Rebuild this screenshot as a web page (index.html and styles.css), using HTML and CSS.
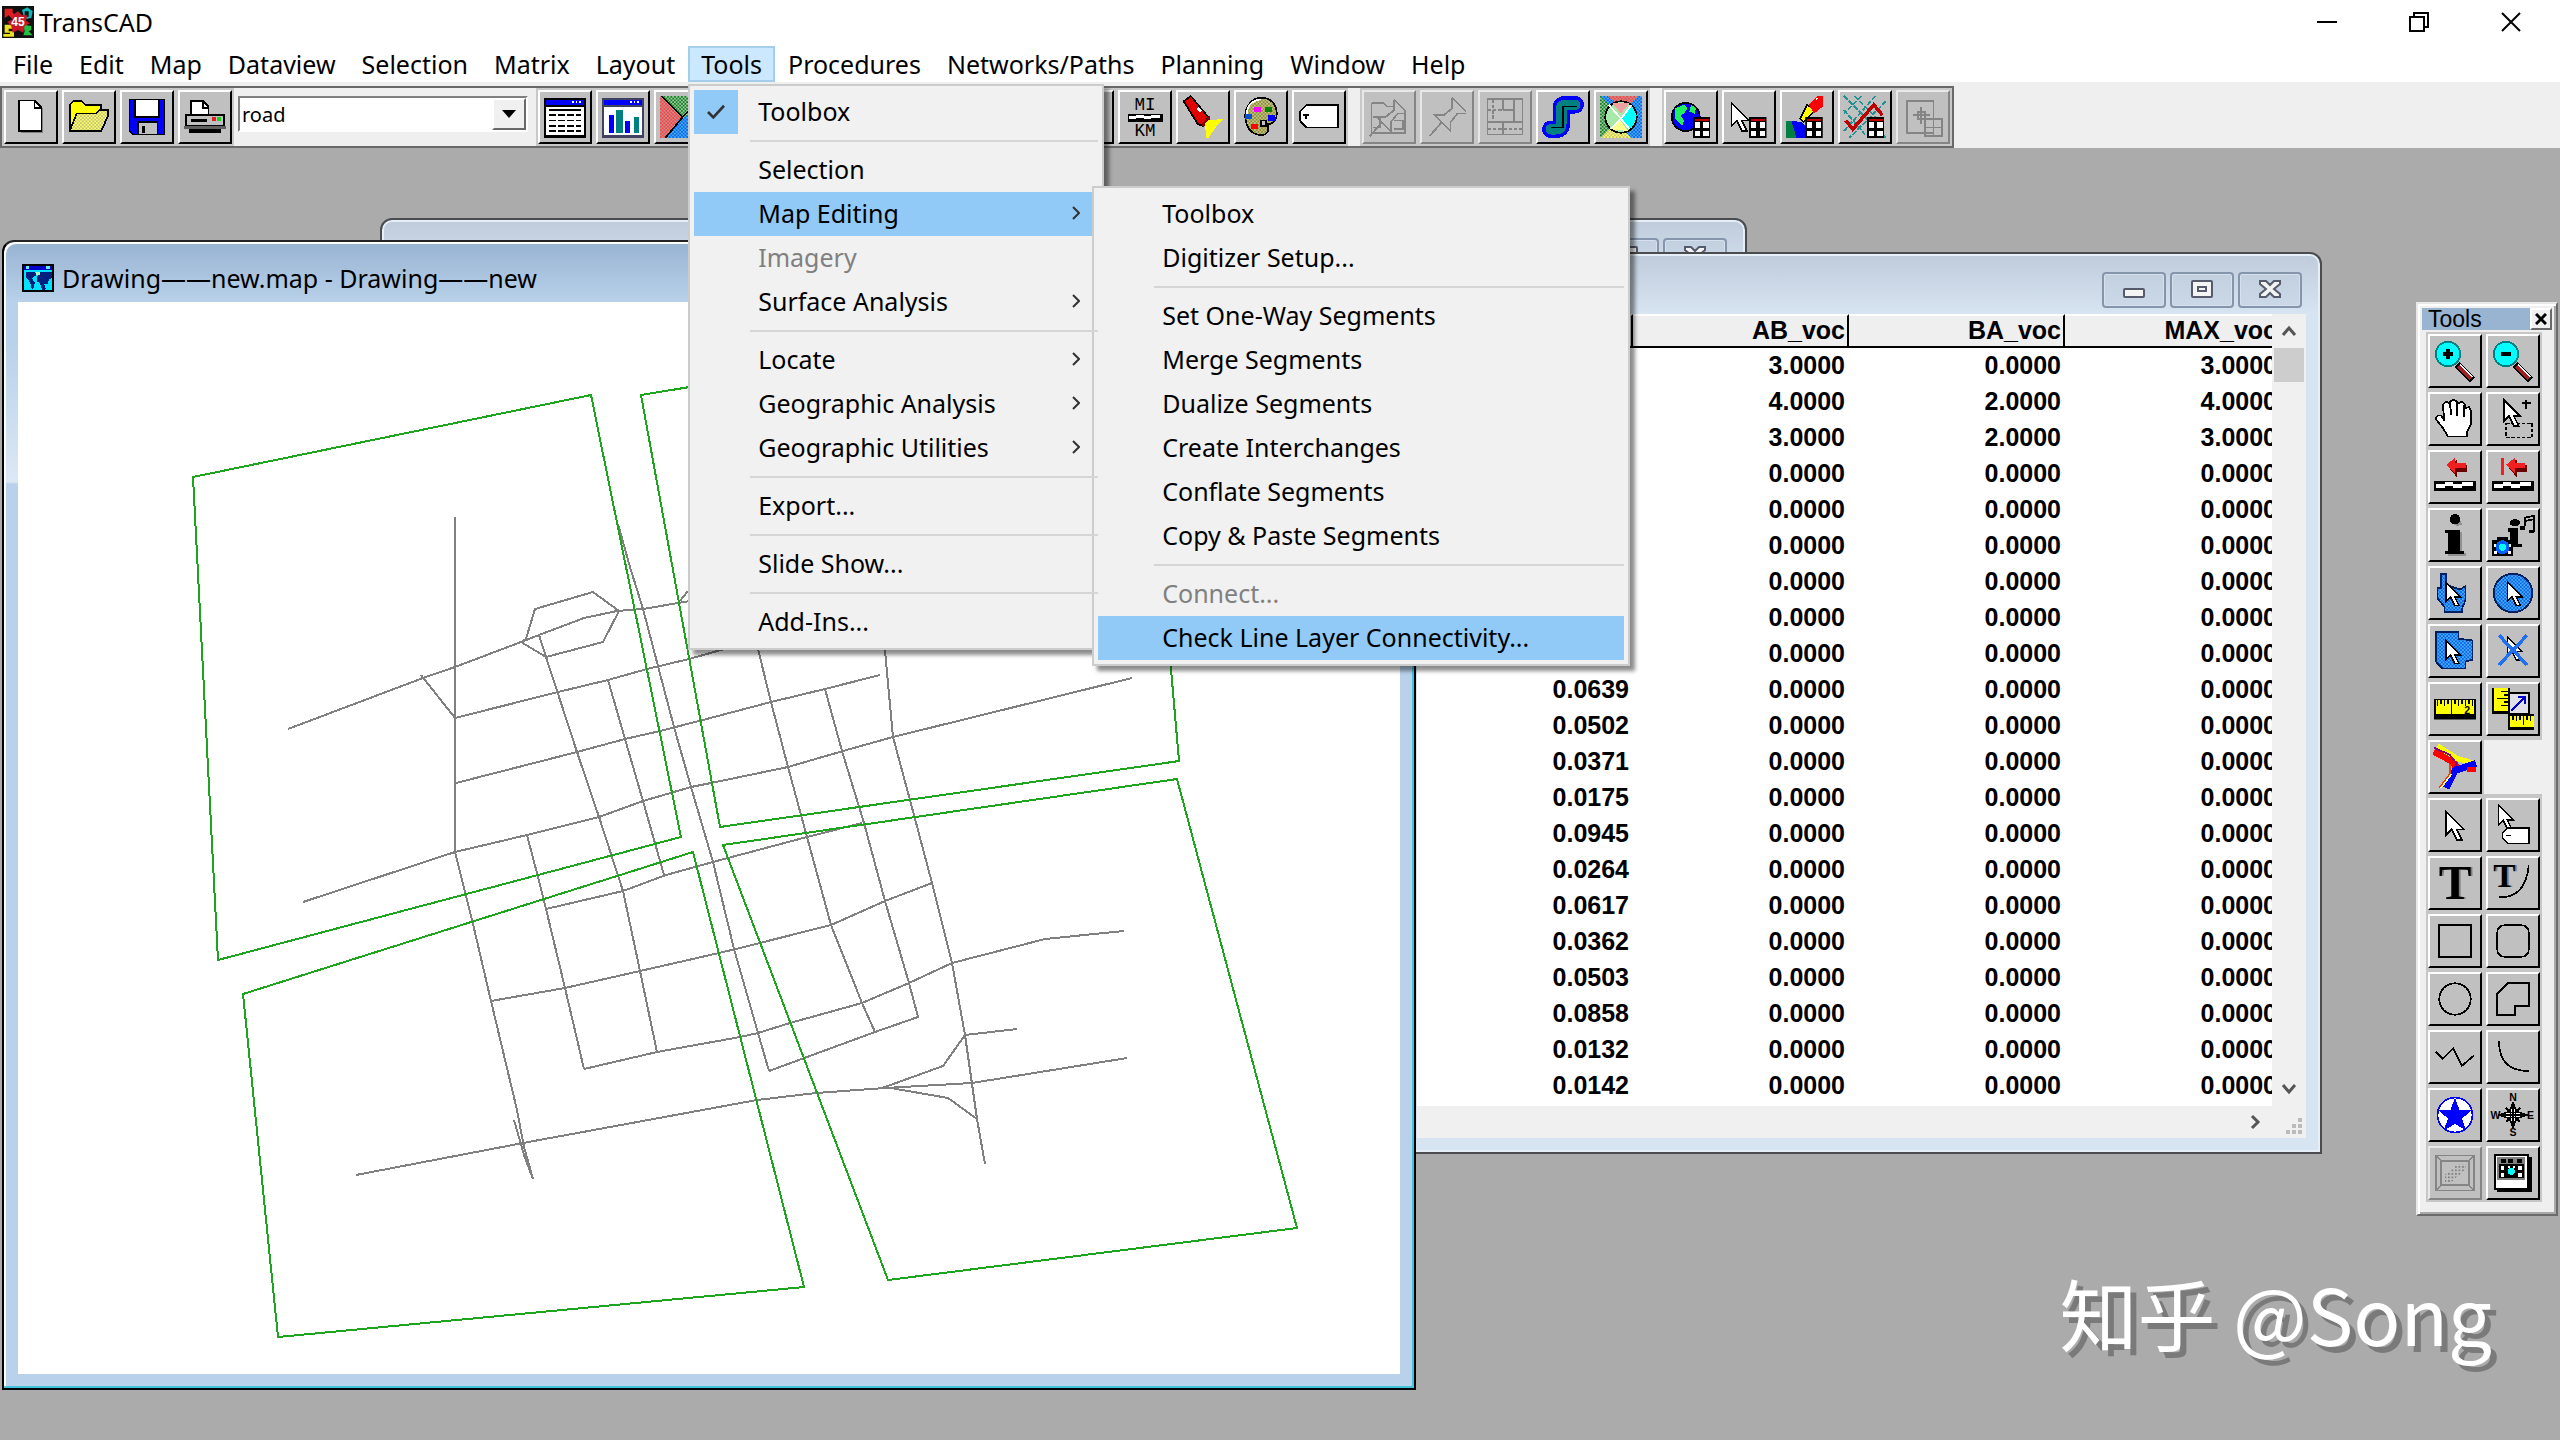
FILE: index.html
```html
<!DOCTYPE html>
<html lang="en">
<head>
    <meta charset="UTF-8">
    <meta name="viewport" content="width=device-width, initial-scale=1.0">
    <title>TransCAD</title>
    <link rel="stylesheet" href="styles.css">
</head>
<body>

    <!-- shared icon parts -->
    <svg class="defs" width="0" height="0" aria-hidden="true">
        <defs>
            <pattern id="dYellow" width="2" height="2" patternUnits="userSpaceOnUse"><rect width="2" height="2" fill="#ffff60"/><path d="M0 0h1v1H0zM1 1h1v1H1z" fill="#c0c080"/></pattern>
            <pattern id="dOlive" width="2" height="2" patternUnits="userSpaceOnUse"><rect width="2" height="2" fill="#c0c0a0"/><path d="M0 0h1v1H0zM1 1h1v1H1z" fill="#909020"/></pattern>
            <pattern id="dRed" width="2" height="2" patternUnits="userSpaceOnUse"><rect width="2" height="2" fill="#ff4040"/><path d="M0 0h1v1H0zM1 1h1v1H1z" fill="#c09090"/></pattern>
            <pattern id="dGreen" width="2" height="2" patternUnits="userSpaceOnUse"><rect width="2" height="2" fill="#a0c8a0"/><path d="M0 0h1v1H0zM1 1h1v1H1z" fill="#108020"/></pattern>
            <pattern id="dBlue" width="2" height="2" patternUnits="userSpaceOnUse"><rect width="2" height="2" fill="#40b0ff"/><path d="M0 0h1v1H0zM1 1h1v1H1z" fill="#1060e0"/></pattern>
            <pattern id="dGray" width="2" height="2" patternUnits="userSpaceOnUse"><path d="M0 0h1v1H0z" fill="#808080"/></pattern>
            <symbol id="cursor" viewBox="0 0 12 18"><path d="M1 1v13l3-3 3 6h3l-3-6h4z" fill="#fff" stroke="#000"/></symbol>
            <symbol id="cells" viewBox="0 0 10 12"><path d="M0 0h10v12H0z"/><path d="M1 1h8v1H1z" fill="#c00000"/><path d="M1 3h3v3H1zM6 3h3v3H6zM1 8h3v3H1zM6 8h3v3H6z" fill="#fff"/></symbol>
            <symbol id="scale" viewBox="0 0 24 6"><path d="M0 0h24v6H0z"/><path d="M1 2h5v2H1zM11 2h5v2h-5zM6 1h5v2H6zM16 1h6v2h-6z" fill="#fff"/></symbol>
            <symbol id="ruler" viewBox="0 0 24 12"><path d="M0 0h24v12H0z"/><path d="M1 1h22v8H1z" fill="#ff0"/><path d="M2 1v3M4 1v2M6 1v3M8 1v2M10 1v8M12 1v2M14 1v3M16 1v2M18 1v3M20 1v2M22 1v3" stroke="#000"/></symbol>
        </defs>
    </svg>

    <header class="titlebar">
        <svg class="app-icon" viewBox="0 0 24 24" aria-hidden="true">
            <path d="M0 0h24v24H0z" fill="#101010"/>
            <path d="M2 2h6v3l3 3-3 2-3-3-3 2z" fill="#e02020"/>
            <path d="M15 3l4-2 4 3-1 5-5 1zM17 4v4h3V4z" fill="#10b8b8" fill-rule="evenodd"/>
            <path d="M2 14h7v3H5v2h4v4H1v-2h5v-1H2z" fill="#e8e020"/>
            <path d="M16 14l6 1v3l-2 1 3 3h-7l1-3z" fill="#20c040"/>
            <path d="M12 4l3 3h4l-1 4 3 2-4 2-1 5-4-2-4 2-1-5-3-3 4-2 1-4z" fill="#c81828"/>
            <text x="12" y="15" class="badge-text">45</text>
        </svg>
        <h1>TransCAD</h1>
        <div class="window-controls">
            <button aria-label="Minimize"><svg viewBox="0 0 20 20"><path d="M0 10h20" stroke="#000" stroke-width="2"/></svg></button>
            <button aria-label="Restore"><svg viewBox="0 0 20 20" fill="none" stroke="#000" stroke-width="2"><path d="M1 5h14v14H1zM5 5V1h14v14h-4"/></svg></button>
            <button aria-label="Close"><svg viewBox="0 0 20 20"><path d="M1 1l18 18M19 1L1 19" stroke="#000" stroke-width="2"/></svg></button>
        </div>
    </header>

    <nav class="menubar">
        <button>File</button>
        <button>Edit</button>
        <button>Map</button>
        <button>Dataview</button>
        <button>Selection</button>
        <button>Matrix</button>
        <button>Layout</button>
        <div class="menu-holder">
            <button class="open">Tools</button>
            <ul class="menu menu-tools">
                <li><button><span class="check"><svg viewBox="0 0 22 18"><path d="M2 9l6 6L20 2" fill="none" stroke="#333" stroke-width="3"/></svg></span>Toolbox</button></li>
                <li class="sep"></li>
                <li><button>Selection</button></li>
                <li>
                    <button class="active">Map Editing<svg class="more" viewBox="0 0 8 14"><path d="M1 1l6 6-6 6"/></svg></button>
                    <ul class="menu menu-editing">
                        <li><button>Toolbox</button></li>
                        <li><button>Digitizer Setup...</button></li>
                        <li class="sep"></li>
                        <li><button>Set One-Way Segments</button></li>
                        <li><button>Merge Segments</button></li>
                        <li><button>Dualize Segments</button></li>
                        <li><button>Create Interchanges</button></li>
                        <li><button>Conflate Segments</button></li>
                        <li><button>Copy &amp; Paste Segments</button></li>
                        <li class="sep"></li>
                        <li><button disabled>Connect...</button></li>
                        <li><button class="active">Check Line Layer Connectivity...</button></li>
                    </ul>
                </li>
                <li><button disabled>Imagery</button></li>
                <li><button>Surface Analysis<svg class="more" viewBox="0 0 8 14"><path d="M1 1l6 6-6 6"/></svg></button></li>
                <li class="sep"></li>
                <li><button>Locate<svg class="more" viewBox="0 0 8 14"><path d="M1 1l6 6-6 6"/></svg></button></li>
                <li><button>Geographic Analysis<svg class="more" viewBox="0 0 8 14"><path d="M1 1l6 6-6 6"/></svg></button></li>
                <li><button>Geographic Utilities<svg class="more" viewBox="0 0 8 14"><path d="M1 1l6 6-6 6"/></svg></button></li>
                <li class="sep"></li>
                <li><button>Export...</button></li>
                <li class="sep"></li>
                <li><button>Slide Show...</button></li>
                <li class="sep"></li>
                <li><button>Add-Ins...</button></li>
            </ul>
        </div>
        <button>Procedures</button>
        <button>Networks/Paths</button>
        <button>Planning</button>
        <button>Window</button>
        <button>Help</button>
    </nav>

    <div class="toolbar">
        <div class="strip">
            <div class="group">
                <button class="tool" aria-label="New"><svg viewBox="0 0 24 24"><path d="M6 4h9v3h4v14H6z" fill="#808080"/><path d="M5 2.500h9l4 4V20H5z" fill="#fff" stroke="#000"/><path d="M14 3v4h4" fill="none" stroke="#000"/></svg></button>
                <button class="tool" aria-label="Open"><svg viewBox="0 0 24 24"><path d="M1 20V5l2-2h5l2 2h9v5" fill="#ff0" stroke="#000"/><path d="M1 20l4-10h11l2-2h5v3l-4 9z" fill="url(#dYellow)" stroke="#000"/></svg></button>
                <button class="tool" aria-label="Save"><svg viewBox="0 0 24 24"><path d="M2 2h20v20H4l-2-2z" fill="#00f" stroke="#000"/><path d="M5 2h14v10H5z" fill="#fff" stroke="#000"/><path d="M7 15h11v7H7z" fill="#c0c0c0" stroke="#000"/><path d="M9 17h2v4H9z"/></svg></button>
                <button class="tool" aria-label="Print"><svg viewBox="0 0 24 24"><path d="M4 11V3h7l3 3v5" fill="#fff" stroke="#000"/><path d="M11 3v4h3" fill="none" stroke="#000"/><path d="M1 11h22v6H1z" fill="#c0c0c0" stroke="#000"/><path d="M0 17h24v2H0z" fill="#606060"/><path d="M4 13h9v2H4z"/><path d="M3 19h18v2H3z"/><path d="M16 12h2v2h-2z" fill="#e02020"/><path d="M19 12h2v2h-2z" fill="#20d020"/></svg></button>
            </div>
            <div class="layer-box">
                <div class="combo">
                    <select aria-label="Layer"><option>road</option></select>
                    <span class="drop"></span>
                </div>
            </div>
            <div class="group">
                <button class="tool" aria-label="Dataview"><svg viewBox="0 0 24 24"><path d="M0 1h24v23H0z"/><path d="M1 2h22v3H1z" fill="#00f"/><path d="M16 3h1v1h-1zM18 3h1v1h-1zM20 3h1v1h-1z" fill="#fff"/><path d="M1 6h22v16H1z" fill="#fff"/><path d="M3 8h18M3 11h4M8 11h4M13 11h4M18 11h3M3 14h4M8 14h4M13 14h4M18 14h3M3 17h4M8 17h4M13 17h4M18 17h3M3 20h4M8 20h4M13 20h4M18 20h3" stroke="#000"/></svg></button>
                <button class="tool" aria-label="Chart"><svg viewBox="0 0 24 24"><path d="M0 1h24v23H0z" fill="#404060"/><path d="M1 2h22v3H1z" fill="#00f"/><path d="M16 3h1v1h-1zM18 3h1v1h-1zM20 3h1v1h-1z" fill="#fff"/><path d="M1 6h22v16H1z" fill="#fff"/><path d="M4 11h3v10H4zM13 14h3v7h-3z" fill="#00f"/><path d="M8 8h4v13H8zM18 12h3v9h-3z" fill="#008080"/></svg></button>
                <button class="tool" aria-label="Color theme"><svg viewBox="0 0 24 24"><path d="M0 0h24v24H0z" fill="url(#dBlue)"/><path d="M0 0l12 12L3 24H0z" fill="url(#dRed)"/><path d="M0 0h24v4L13 13z" fill="url(#dGreen)"/><path d="M1 0l12 12L3 24M13 12L24 0" fill="none" stroke="#000"/></svg></button>
                <button class="tool"></button>
                <button class="tool"></button>
                <button class="tool"></button>
                <button class="tool"></button>
                <button class="tool"></button>
                <button class="tool"></button>
                <button class="tool"></button>
                <button class="tool" aria-label="Map units"><svg viewBox="0 0 24 24"><text x="12" y="8" class="unit-text">MI</text><use href="#scale" x="0" y="10" width="24" height="5"/><text x="12" y="23" class="unit-text">KM</text></svg></button>
                <button class="tool" aria-label="Find"><svg viewBox="0 0 24 24"><path d="M1 3l4-3 10 12-3 5-3-1z" fill="#e00000" stroke="#000"/><path d="M9 7l2 2" stroke="#fff" stroke-width="2"/><path d="M11 16l5-5v4l-4 3z" fill="#800000"/><path d="M13 16l2-2 9-1-4 4-5 7h-1z" fill="#ff0"/></svg></button>
                <button class="tool" aria-label="Styles"><svg viewBox="0 0 24 24"><path d="M12 1c6 0 9 4 9 9s-3 6-5 6v3c0 3-3 4-6 3-5-1-7-6-7-11s4-10 9-10z" fill="url(#dOlive)" stroke="#000"/><path d="M4 10c0-5 4-8 8-8" fill="none" stroke="#fff"/><path d="M8 6h4v3H8z" fill="#f0f"/><path d="M14 6h4v3h-4z" fill="#008000"/><path d="M3 10h4v3H3z" fill="#0050d0"/><path d="M16 11h4v3h-4z" fill="#00f"/><path d="M6 16h4v3H6z" fill="#f00"/><path d="M12 14h3v3h-3z" fill="#c0c0c0" stroke="#000"/></svg></button>
                <button class="tool" aria-label="Labels"><svg viewBox="0 0 24 24"><path d="M5 5h18v13H5l-4-4V9z" fill="#fff" stroke="#000"/><path d="M3 11h3M4.500 10v3" stroke="#000"/></svg></button>
            </div>
            <div class="group">
                <button class="tool" disabled aria-label="Edit pins"><svg viewBox="0 0 24 24" fill="none" stroke="#858585"><path d="M2 4h7l2 2h4M2 4v17h19V8M15 2l6 6M15 2v6l-5 4h-5l8 8v-5l4-5h4M8 15l-7 8M3 12h4v6H3M15 14h5v5h-5"/></svg></button>
                <button class="tool" disabled aria-label="Pin"><svg viewBox="0 0 24 24" fill="none" stroke="#858585"><path d="M15 1l8 8M15 1v6l-5 4H5l9 9v-5l4-5h5M9 15l-7 8"/></svg></button>
                <button class="tool" disabled aria-label="Page grid"><svg viewBox="0 0 24 24" fill="none" stroke="#858585"><path d="M2 1.500h20V22H2zM2 15h20M11 15v7M11 8h6M17 2v13M11 2v6"/><path d="M2 8h9M5 2v13M2 19h20" stroke-dasharray="2 1"/></svg></button>
                <button class="tool" aria-label="Route system"><svg viewBox="0 0 24 24"><path d="M19 5h-6q-2 0-2 2v9q0 3-3 3H5" fill="none" stroke="#00f" stroke-width="10" stroke-linecap="round"/><path d="M19 5h-6q-2 0-2 2v9q0 3-3 3H5" fill="none" stroke="#008080" stroke-width="6" stroke-linecap="round"/><path d="M20 6h-8v12H5" fill="none" stroke="#000"/></svg></button>
                <button class="tool" aria-label="Overlay"><svg viewBox="0 0 24 24"><path d="M0 0h24v24H0z" fill="url(#dBlue)"/><path d="M0 0l13 12L0 24z" fill="url(#dGreen)"/><path d="M4 0h18l-8 8z" fill="url(#dRed)"/><path d="M0 24l9-9 9 9z" fill="url(#dYellow)"/><circle cx="12" cy="12" r="9" fill="#a8e8a8" stroke="#000"/><path d="M7 4h10l-5 6z" fill="#f0a0a0"/><path d="M12 13l6-8 3 6-2 6-3 2z" fill="#0ff"/><path d="M6 19l5-6 5 7z" fill="#ffff90"/><path d="M5 5l7 8 6-8M12 13l-6 6M12 13l5 6" fill="none" stroke="#fff"/></svg></button>
            </div>
            <div class="group">
                <button class="tool" aria-label="Select by location"><svg viewBox="0 0 24 24"><circle cx="9" cy="12" r="8" fill="#00f" stroke="#000"/><path d="M3 7l5-2 2 2-2 3-2 1 2 3-1 3-4-4zM12 5l3 2-1 3-3-1z" fill="#20f060"/><use href="#cells" x="13" y="12" width="10" height="12"/></svg></button>
                <button class="tool" aria-label="Select by pointing"><svg viewBox="0 0 24 24"><use href="#cursor" x="1" y="3" width="12" height="18"/><use href="#cells" x="12" y="12" width="10" height="12"/></svg></button>
                <button class="tool" aria-label="Select by value"><svg viewBox="0 0 24 24"><path d="M0 14h4l5 4v6H0z" fill="#008040"/><path d="M3 14l6 1 4 4v5H6z" fill="#00f"/><path d="M8 13l4-8 5 3-7 7z" fill="#ff0" stroke="#000"/><path d="M13 5l5-5h3v6l-5 4z" fill="#f00"/><path d="M17 2l1-1" stroke="#fff"/><use href="#cells" x="11" y="12" width="10" height="12"/></svg></button>
                <button class="tool" aria-label="Select network"><svg viewBox="0 0 24 24"><path d="M0 0l24 24M6 0l16 16M0 8l12 14M18 0L0 20M24 3L3 24M10 0L0 10" stroke="#209090" stroke-dasharray="3 1"/><path d="M1 14l4 5L17 5l5 6" fill="none" stroke="#c00000" stroke-width="2"/><use href="#cells" x="13" y="12" width="10" height="12"/></svg></button>
                <button class="tool" disabled aria-label="Select center"><svg viewBox="0 0 24 24" fill="none" stroke="#858585"><path d="M3 3h15v18H3zM11 6v10M6 11h10M9 9h4v4H9zM13 13h10v10H13zM18 13v10M13 18h10"/></svg></button>
            </div>
        </div>
    </div>

    <main class="workspace">

        <section class="window back">
            <div class="caption">
                <div class="caption-buttons">
                    <button aria-label="Minimize"><svg viewBox="0 0 24 20"><rect x="2" y="9" width="20" height="8" rx="1"/></svg></button>
                    <button aria-label="Maximize"><svg viewBox="0 0 24 20"><rect x="2" y="1" width="20" height="16" rx="1"/><rect x="8" y="7" width="8" height="4"/></svg></button>
                    <button aria-label="Close"><svg viewBox="0 0 24 20"><path d="M2 1h6l4 4 4-4h6v3l-6 5 6 5v3h-6l-4-4-4 4H2v-3l6-5-6-5z"/></svg></button>
                </div>
            </div>
        </section>

        <section class="window dataview">
            <div class="caption">
                <div class="caption-buttons">
                    <button aria-label="Minimize"><svg viewBox="0 0 24 20"><rect x="2" y="9" width="20" height="8" rx="1"/></svg></button>
                    <button aria-label="Maximize"><svg viewBox="0 0 24 20"><rect x="2" y="1" width="20" height="16" rx="1"/><rect x="8" y="7" width="8" height="4"/></svg></button>
                    <button aria-label="Close"><svg viewBox="0 0 24 20"><path d="M2 1h6l4 4 4-4h6v3l-6 5 6 5v3h-6l-4-4-4 4H2v-3l6-5-6-5z"/></svg></button>
                </div>
            </div>
            <div class="sheet">
                <div class="table-wrap">
                    <table>
                        <thead>
                            <tr><th></th><th>AB_voc</th><th>BA_voc</th><th>MAX_voc</th></tr>
                        </thead>
                        <tbody>
                            <tr><td></td><td>3.0000</td><td>0.0000</td><td>3.0000</td></tr>
                            <tr><td></td><td>4.0000</td><td>2.0000</td><td>4.0000</td></tr>
                            <tr><td></td><td>3.0000</td><td>2.0000</td><td>3.0000</td></tr>
                            <tr><td></td><td>0.0000</td><td>0.0000</td><td>0.0000</td></tr>
                            <tr><td></td><td>0.0000</td><td>0.0000</td><td>0.0000</td></tr>
                            <tr><td></td><td>0.0000</td><td>0.0000</td><td>0.0000</td></tr>
                            <tr><td></td><td>0.0000</td><td>0.0000</td><td>0.0000</td></tr>
                            <tr><td></td><td>0.0000</td><td>0.0000</td><td>0.0000</td></tr>
                            <tr><td></td><td>0.0000</td><td>0.0000</td><td>0.0000</td></tr>
                            <tr><td>0.0639</td><td>0.0000</td><td>0.0000</td><td>0.0000</td></tr>
                            <tr><td>0.0502</td><td>0.0000</td><td>0.0000</td><td>0.0000</td></tr>
                            <tr><td>0.0371</td><td>0.0000</td><td>0.0000</td><td>0.0000</td></tr>
                            <tr><td>0.0175</td><td>0.0000</td><td>0.0000</td><td>0.0000</td></tr>
                            <tr><td>0.0945</td><td>0.0000</td><td>0.0000</td><td>0.0000</td></tr>
                            <tr><td>0.0264</td><td>0.0000</td><td>0.0000</td><td>0.0000</td></tr>
                            <tr><td>0.0617</td><td>0.0000</td><td>0.0000</td><td>0.0000</td></tr>
                            <tr><td>0.0362</td><td>0.0000</td><td>0.0000</td><td>0.0000</td></tr>
                            <tr><td>0.0503</td><td>0.0000</td><td>0.0000</td><td>0.0000</td></tr>
                            <tr><td>0.0858</td><td>0.0000</td><td>0.0000</td><td>0.0000</td></tr>
                            <tr><td>0.0132</td><td>0.0000</td><td>0.0000</td><td>0.0000</td></tr>
                            <tr><td>0.0142</td><td>0.0000</td><td>0.0000</td><td>0.0000</td></tr>
                        </tbody>
                    </table>
                </div>
                <div class="vscroll">
                    <button aria-label="Scroll up"><svg viewBox="0 0 16 16"><path d="M2 12l6-7 6 7"/></svg></button>
                    <div class="thumb"></div>
                    <button class="end" aria-label="Scroll down"><svg viewBox="0 0 16 16"><path d="M2 4l6 7 6-7"/></svg></button>
                </div>
                <div class="hscroll">
                    <button aria-label="Scroll right"><svg viewBox="0 0 16 16"><path d="M5 2l6 6-6 6"/></svg></button>
                </div>
                <div class="grip"><svg viewBox="0 0 16 16"><path d="M12 0h4v4h-4zM6 6h4v4H6zM12 6h4v4h-4zM0 12h4v4H0zM6 12h4v4H6zM12 12h4v4h-4z" fill="#bbb"/></svg></div>
            </div>
        </section>

        <section class="window map">
            <div class="caption">
                <svg class="map-icon" viewBox="0 0 20 18" aria-hidden="true">
                    <path d="M0 0h20v18H0z"/><path d="M1 1h18v16H1z" fill="#00e0ff"/><path d="M1 1h18v3H1z" fill="#00c"/><path d="M2 1h2v2H2zM15 1h3v2h-3z" fill="#60f0ff"/>
                    <path d="M2 5h6l1 2-3 2 1 2 1 1-1 4H6l-1-4-3-4zM10 6l3-1h6v4l-2 1-1 3h-2l1 3-2 1-2-5-2-1z" fill="#002080"/><path d="M9 5h2v2H9z" fill="#a0ffc0"/>
                </svg>
                <h2>Drawing——new.map - Drawing——new</h2>
            </div>
            <svg class="canvas" viewBox="18 302 1382 1072" role="img" aria-label="Road map">
                <g class="roads">
                    <path d="M455 517V852L473 924 491 1001 517 1110 524 1147 533 1179M514 1120L524 1155 533 1179"/>
                    <path d="M288 729L423 678 455 667 521 642 539 635 584 618 617 611 643 609 690 601 760 590"/>
                    <path d="M421 675L455 718"/>
                    <path d="M526 639L535 609 593 592 619 611 603 642 546 657 521 642z"/>
                    <path d="M680 601L687 592 700 590"/>
                    <path d="M455 718L558 692 608 680 647 669 689 659 721 650 860 610"/>
                    <path d="M456 783L577 752 625 739 660 731 699 721 771 702 825 689 880 675"/>
                    <path d="M303 902L455 852 527 835 599 817 643 801 691 787 711 783 788 767 843 751 893 737 1132 678"/>
                    <path d="M546 909L623 891 666 875 713 862 728 858 807 837 862 823"/>
                    <path d="M491 1001L565 988 640 971 719 953 736 949 831 925 885 901 932 883"/>
                    <path d="M584 1069L657 1052 740 1037 758 1033 790 1023 862 1003 909 983 952 963 1045 939 1124 931"/>
                    <path d="M769 1071L875 1032 918 1017 909 983 885 901 864 823 842 751 825 689"/>
                    <path d="M875 1032L862 1003 831 925 807 837 788 767 771 702 757 645"/>
                    <path d="M618 524L630 567 643 609 674 727 691 787 713 862 734 949 758 1033 769 1071"/>
                    <path d="M539 635L546 657 577 752 599 817 623 891 640 971 657 1052"/>
                    <path d="M608 680L625 739 643 801 664 875"/>
                    <path d="M527 835L538 877 546 909 565 988 584 1069"/>
                    <path d="M884 640L893 737 910 800 932 883 952 963 965 1035 977 1119 985 1164"/>
                    <path d="M1017 1029L965 1035 943 1066 885 1087 948 1098 977 1119"/>
                    <path d="M356 1175L523 1143 757 1100 816 1093 885 1088 972 1083 1127 1058"/>
                </g>
                <g class="zones">
                    <path d="M193 477L591 395 681 837 218 960z"/>
                    <path d="M641 395L1140 313 1179 761 720 827z"/>
                    <path d="M723 845L1177 779 1297 1228 888 1280z"/>
                    <path d="M243 994L693 852 804 1287 278 1337z"/>
                </g>
            </svg>
        </section>

        <aside class="palette">
            <div class="palette-title">
                <h2>Tools</h2>
                <button aria-label="Close"><svg viewBox="0 0 12 12"><path d="M1 1l10 10M11 1L1 11" stroke="#000" stroke-width="3"/></svg></button>
            </div>
            <div class="palette-grid">
                <button class="tool" aria-label="Zoom in"><svg viewBox="0 0 24 24"><path d="M13 14l9 9" stroke="#000" stroke-width="4"/><path d="M14 15l7 7" stroke="#a02020" stroke-width="2"/><path d="M15 14l7 7" stroke="#fff"/><circle cx="8" cy="8" r="7" fill="#0ff" stroke="#008080"/><path d="M5 8h6M8 5v6" stroke="#000" stroke-width="2"/></svg></button>
                <button class="tool" aria-label="Zoom out"><svg viewBox="0 0 24 24"><path d="M13 14l9 9" stroke="#000" stroke-width="4"/><path d="M14 15l7 7" stroke="#a02020" stroke-width="2"/><path d="M15 14l7 7" stroke="#fff"/><circle cx="8" cy="8" r="7" fill="#0ff" stroke="#008080"/><path d="M5 8h6" stroke="#000" stroke-width="2"/></svg></button>
                <button class="tool" aria-label="Pan"><svg viewBox="0 0 24 24"><path d="M8 22l-3-5-4-5 1-2h2l2 3-1-9 2-2 2 1V2l2-1 2 1 1 1 2-1 2 2v2l2-1 1 2v8l-2 4v3z" fill="#fff" stroke="#000"/><path d="M9 3l1 7M13 2v8M17 4v7" stroke="#000"/></svg></button>
                <button class="tool" aria-label="Select by box"><svg viewBox="0 0 24 24"><path d="M8 14.500h15v8H8z" fill="none" stroke="#000" stroke-dasharray="2 1"/><use href="#cursor" x="6" y="0" width="11" height="17"/><path d="M17 3h5M19.500 1v5" stroke="#000"/></svg></button>
                <button class="tool" aria-label="Previous scale"><svg viewBox="0 0 24 24"><path d="M8 6l5-4v3h6v4h-6v3z" fill="#600"/><path d="M7 5l5-4v3h6v3h-6v3z" fill="#f02020"/><use href="#scale" x="0" y="14" width="24" height="6"/></svg></button>
                <button class="tool" aria-label="Initial scale"><svg viewBox="0 0 24 24"><path d="M9 6l5-4v3h6v4h-6v3z" fill="#600"/><path d="M8 5l5-4v3h6v3h-6v3zM5 1h2v10H5z" fill="#f02020"/><use href="#scale" x="0" y="14" width="24" height="6"/></svg></button>
                <button class="tool" aria-label="Info"><svg viewBox="0 0 24 24"><path d="M9 4q3-4 6 0l1 2-3 1zM8 10h8v12h2v2H8z" fill="#909090"/><ellipse cx="12" cy="3" rx="3" ry="3"/><path d="M6 9h9v12h2v2H6v-2h2V11H6z"/></svg></button>
                <button class="tool" aria-label="Multimedia info"><svg viewBox="0 0 24 24"><ellipse cx="13" cy="5" rx="3" ry="2"/><path d="M9 8h6v9h2v2h-7v-9H9z"/><path d="M19 7V2l5-1v9M19 4l5-1" fill="none" stroke="#000"/><path d="M16 7h3v2h-3zM21 9h3v2h-3z"/><path d="M0 15h12v9H0z"/><path d="M1 17h2v2H1zM9 17h2v2H9zM1 21h2v2H1zM9 21h2v2H9z" fill="#fff"/><circle cx="6" cy="19" r="4" fill="#0060ff"/><circle cx="6" cy="19" r="2" fill="#0ff"/><path d="M3 13h6v2H3z"/></svg></button>
                <button class="tool" aria-label="Select by pointing"><svg viewBox="0 0 24 24"><path d="M4 1h3v7h2l3 1 3 1 3-2v8l-2 5v2H6v-3l-4-5V9h2z" fill="url(#dBlue)" stroke="#002060"/><use href="#cursor" x="6" y="5" width="10" height="15"/></svg></button>
                <button class="tool" aria-label="Select by circle"><svg viewBox="0 0 24 24"><circle cx="12" cy="12" r="11" fill="url(#dBlue)" stroke="#002060"/><use href="#cursor" x="8" y="5" width="10" height="15"/></svg></button>
                <button class="tool" aria-label="Select by shape"><svg viewBox="0 0 24 24"><path d="M1 1h13v4l8 1v11l-4 1v4H5l-4-4z" fill="url(#dBlue)" stroke="#002060"/><use href="#cursor" x="6" y="5" width="10" height="15"/></svg></button>
                <button class="tool" aria-label="Clear selection"><svg viewBox="0 0 24 24"><use href="#cursor" x="8" y="3" width="10" height="15"/><path d="M4 3l16 17M20 3L4 20" stroke="#2070f0" stroke-width="2"/></svg></button>
                <button class="tool" aria-label="Measure distance"><svg viewBox="0 0 24 24"><use href="#ruler" x="0" y="6" width="24" height="12"/><text x="19" y="15" class="tiny-text">2</text></svg></button>
                <button class="tool" aria-label="Measure area"><svg viewBox="0 0 24 24"><path d="M0 0h10v15H0z"/><path d="M1 0h8v13H1z" fill="#ff0"/><path d="M5 2h4M7 4h2M3 6h6M7 8h2M5 10h4" stroke="#000"/><path d="M10 3h11v12H10z" fill="#e0e0e8" stroke="#000"/><path d="M11 13l8-8M15 5h4v4" fill="none" stroke="#00c"/><path d="M9 15h15v9H9z"/><path d="M10 16h14v6H10z" fill="#ff0"/><path d="M12 16v2M14 16v3M16 16v2M18 16v5M20 16v2M22 16v3" stroke="#000"/></svg></button>
                <button class="tool" aria-label="Shortest path"><svg viewBox="0 0 24 24"><path d="M0 3l11 6 2 4" fill="none" stroke="#f00" stroke-width="4"/><path d="M2 0l11 7 10 3" fill="none" stroke="#ff0" stroke-width="3"/><path d="M0 1l9 4 4 5-2 4" fill="none" stroke="#800080"/><path d="M7 24l5-10 12-4" fill="none" stroke="#00f" stroke-width="4"/><path d="M19 12h5v3h-5z" fill="#f00"/><path d="M3 24l6-8v-6" fill="none" stroke="#f04000"/><path d="M4 24l6-8" stroke="#ffffa0"/></svg></button>
                <span class="gap"></span>
                <button class="tool" aria-label="Pointer"><svg viewBox="0 0 24 24"><use href="#cursor" x="6" y="3" width="12" height="19"/></svg></button>
                <button class="tool" aria-label="Label pointer"><svg viewBox="0 0 24 24"><use href="#cursor" x="3" y="0" width="10" height="15"/><path d="M9 13.500h12v9H9l-3-3v-3z" fill="#fff" stroke="#000"/><path d="M8 18h3" stroke="#000"/></svg></button>
                <button class="tool" aria-label="Text"><svg viewBox="0 0 24 24"><text x="13" y="21" class="text-tool shade">T</text><text x="12" y="21" class="text-tool">T</text></svg></button>
                <button class="tool" aria-label="Curved text"><svg viewBox="0 0 24 24"><text x="8" y="14" class="text-tool small shade">T</text><text x="7" y="14" class="text-tool small">T</text><path d="M4 20q15 1 17-18" fill="none" stroke="#000"/></svg></button>
                <button class="tool" aria-label="Rectangle"><svg viewBox="0 0 24 24"><path d="M3 3h18v18H3z" fill="none" stroke="#000"/></svg></button>
                <button class="tool" aria-label="Rounded rectangle"><svg viewBox="0 0 24 24"><rect x="3" y="3" width="18" height="18" rx="4" fill="none" stroke="#000"/></svg></button>
                <button class="tool" aria-label="Ellipse"><svg viewBox="0 0 24 24"><circle cx="12" cy="12" r="9" fill="none" stroke="#000"/></svg></button>
                <button class="tool" aria-label="Polygon"><svg viewBox="0 0 24 24"><path d="M9 3h12v13h-8v5H3V9z" fill="none" stroke="#000"/></svg></button>
                <button class="tool" aria-label="Polyline"><svg viewBox="0 0 24 24"><path d="M1 9l4 4 6-6 5 10 7-6" fill="none" stroke="#000"/></svg></button>
                <button class="tool" aria-label="Curve"><svg viewBox="0 0 24 24"><path d="M4 3q0 17 17 17" fill="none" stroke="#000"/></svg></button>
                <button class="tool" aria-label="Symbol"><svg viewBox="0 0 24 24"><circle cx="12" cy="12" r="10" fill="#fff" stroke="#00f"/><path d="M12 2l2.500 7H22l-6 5 2.500 7-6.500-4-6.500 4L8 14 2 9h7.500z" fill="#00f"/></svg></button>
                <button class="tool" aria-label="North arrow"><svg viewBox="0 0 24 24"><path d="M12 5l2 5 6 2-6 2-2 5-2-5-6-2 6-2z" fill="#fff" stroke="#000"/><path d="M12 5v14M4 12h16M8 8l3 3M16 8l-3 3M8 16l3-3M16 16l-3-3" stroke="#000"/><text x="12" y="4" class="tiny-text">N</text><text x="12" y="24" class="tiny-text">S</text><text x="2" y="14" class="tiny-text">W</text><text x="22" y="14" class="tiny-text">E</text></svg></button>
                <button class="tool" disabled aria-label="Frame"><svg viewBox="0 0 24 24"><path d="M1 2h22v20H1zM4 5h16v14H4z" fill="none" stroke="#858585"/><path d="M1 2l3 3M23 2l-3 3M1 22l3-3M23 22l-3-3" stroke="#858585"/><path d="M6 17v-4l8-6h4v3l-8 7z" fill="url(#dGray)"/></svg></button>
                <button class="tool" aria-label="Bitmap"><svg viewBox="0 0 24 24"><path d="M3 3h20v20H3z"/><path d="M1.500 1.500h19V21h-19z" fill="#fff" stroke="#000"/><path d="M3 3h16v13H3z" fill="#808080"/><path d="M4 7h14v8H4zM5 4h3v2H5zM9 4h3v2H9zM14 4h3v2h-3z"/><path d="M5 8h2v2H5zM9 8h1v1H9zM12 8h1v1h-1zM15 8h2v2h-2zM5 12h2v2H5zM15 12h2v2h-2z" fill="#fff"/><circle cx="11" cy="11" r="2" fill="#0ff"/></svg></button>
            </div>
        </aside>

        <p class="watermark">知乎 @Song</p>
    </main>

</body>
</html>
```
FILE: styles.css
```css
* {
    box-sizing: border-box;
}

body {
    margin: 0;
    height: 100vh;
    display: flex;
    flex-direction: column;
    overflow: hidden;
    background: #fff;
    color: #000;
    font-family: "Noto Sans", "Noto Sans CJK SC", sans-serif;
    font-size: 25px;
}

h1, h2, p, ul {
    margin: 0;
    padding: 0;
    font-size: inherit;
    font-weight: normal;
}

ul {
    list-style: none;
}

button {
    margin: 0;
    padding: 0;
    border: 0;
    background: none;
    font: inherit;
    color: inherit;
}

.defs {
    position: absolute;
}

/* title bar */
.titlebar {
    display: flex;
    align-items: center;
    height: 46px;
    padding: 0 0 2px 2px;
    gap: 5px;
}

.app-icon {
    width: 32px;
    height: 32px;
}

.badge-text {
    font: bold 9px "Liberation Sans", sans-serif;
    fill: #fff;
    text-anchor: middle;
}

.window-controls {
    display: flex;
    margin-left: auto;
    padding-right: 3px;
}

.window-controls button {
    display: flex;
    align-items: center;
    justify-content: center;
    width: 92px;
    height: 44px;
}

.window-controls svg {
    width: 20px;
    height: 20px;
}

/* menus */
.menubar {
    display: flex;
    height: 36px;
    position: relative;
    z-index: 10;
}

.menubar > button, .menu-holder > button {
    height: 36px;
    padding: 0 13px;
    line-height: 36px;
}

.menu-holder {
    position: relative;
}

.menu-holder > .open {
    background: #cce8ff;
    box-shadow: inset 0 0 0 2px #a5cdec;
}

.menu {
    position: absolute;
    padding: 4px;
    background: #f1f1f1;
    border: 2px solid #ccc;
    box-shadow: 5px 5px 4px rgba(0, 0, 0, 0.45);
}

.menu-tools {
    top: 38px;
    left: 0;
    width: 416px;
}

.menu-editing {
    top: -6px;
    left: 398px;
    width: 538px;
}

.menu li {
    position: relative;
}

.menu button {
    display: flex;
    align-items: center;
    width: 100%;
    height: 44px;
    padding: 0 18px 3px 64px;
    text-align: left;
}

.menu button.active {
    background: #91c9f7;
}

.menu button:disabled {
    color: #808080;
}

.menu .sep {
    height: 14px;
    margin-left: 56px;
    background: linear-gradient(#d5d5d5, #d5d5d5) 0 6px / 100% 2px no-repeat;
}

.check {
    position: absolute;
    left: 0;
    top: 0;
    display: flex;
    align-items: center;
    justify-content: center;
    width: 44px;
    height: 44px;
    background: #91c9f7;
}

.check svg {
    width: 20px;
    height: 16px;
}

.more {
    width: 8px;
    height: 14px;
    margin-left: auto;
    fill: none;
    stroke: #333;
    stroke-width: 2;
}

/* toolbar */
.toolbar {
    display: flex;
    padding-top: 4px;
    background: #efefef;
}

.strip {
    display: flex;
    gap: 12px;
    border: 2px solid #696969;
}

.group {
    display: flex;
    gap: 4px;
    padding: 2px;
    background: #c8c8c8;
}

.tool {
    display: flex;
    align-items: center;
    justify-content: center;
    width: 54px;
    height: 54px;
    background: #c0c0c0;
    border: 2px solid;
    border-color: #fff #000 #000 #fff;
}

.tool:disabled {
    border-color: #e8e8e8 #858585 #858585 #e8e8e8;
}

.tool svg {
    width: 42px;
    height: 42px;
    shape-rendering: crispEdges;
    overflow: visible;
}

.layer-box {
    display: flex;
    align-items: flex-start;
    width: 302px;
    margin: 0 -12px;
    padding: 8px 8px 0 4px;
}

.combo {
    display: flex;
    flex: 1;
    height: 36px;
    background: #fff;
    border: 2px solid;
    border-color: #808080 #fff #fff #808080;
}

.combo select {
    flex: 1;
    padding: 0 2px;
    appearance: none;
    border: 0;
    background: #fff;
    color: #000;
    font: 20px "Noto Sans", sans-serif;
}

.drop {
    display: flex;
    align-items: center;
    justify-content: center;
    width: 34px;
    background: #f0f0f0;
    border: 2px solid;
    border-color: #fff #696969 #696969 #fff;
}

.drop::before {
    content: "";
    border: 7px solid transparent;
    border-top: 8px solid #000;
    border-bottom: 0;
}

.unit-text {
    font: 10px "Liberation Mono", monospace;
    text-anchor: middle;
}

.tiny-text {
    font: bold 6px "Liberation Sans", sans-serif;
    text-anchor: middle;
}

.text-tool {
    font: bold 28px "Liberation Serif", serif;
    text-anchor: middle;
}

.text-tool.small {
    font-size: 19px;
}

.shade {
    fill: #808080;
}

/* child windows */
.workspace {
    position: relative;
    flex: 1;
    overflow: hidden;
    background: #ababab;
}

.window {
    position: absolute;
    display: flex;
    flex-direction: column;
    padding: 0 14px 14px;
    border: 2px solid #4a4c50;
    border-radius: 12px 12px 0 0;
    background: linear-gradient(#bfcbda, #d7e4f2 60px);
    box-shadow: inset 0 0 0 2px #e6eef7;
}

.back {
    top: 70px;
    left: 380px;
    width: 1367px;
    height: 400px;
}

.dataview {
    top: 104px;
    left: 1401px;
    width: 921px;
}

.map {
    top: 92px;
    left: 2px;
    width: 1414px;
    border-color: #222 #000 #000;
    background: linear-gradient(#98b3d2, #b9d1ea 60px, #b9d1ea 100px, #dce8f5 240px, #b9d1ea 242px);
    box-shadow: inset -2px -2px 0 #44c4dc, inset 2px 2px 0 #fff;
}

.caption {
    display: flex;
    align-items: center;
    height: 60px;
    flex: none;
}

.map .caption {
    gap: 8px;
    padding: 12px 4px 0;
}

.map-icon {
    width: 32px;
    height: 28px;
    shape-rendering: crispEdges;
}

.caption-buttons {
    display: flex;
    gap: 4px;
    margin-left: auto;
    padding: 12px 4px 0 0;
}

.caption-buttons button {
    display: flex;
    align-items: center;
    justify-content: center;
    width: 64px;
    height: 36px;
    border: 2px solid #8595ab;
    border-radius: 4px;
    background: linear-gradient(#c3d0df, #cbd8e7);
    box-shadow: inset 0 0 0 1px #d6e1ed;
}

.caption-buttons svg {
    width: 24px;
    height: 20px;
    fill: #f4f4f4;
    stroke: #565b6b;
    stroke-width: 2;
}

.canvas {
    display: block;
    width: 100%;
    background: #fff;
    fill: none;
    stroke-width: 2;
    shape-rendering: crispEdges;
}

.roads {
    stroke: #808080;
}

.zones {
    stroke: #1ea51e;
}

/* data sheet */
.sheet {
    display: grid;
    grid-template-columns: 1fr 34px;
    grid-template-rows: auto 32px;
    background: #f0f0f0;
}

.table-wrap {
    height: 792px;
    overflow: hidden;
    background: #fff;
}

table {
    width: 864px;
    table-layout: fixed;
    border-collapse: separate;
    border-spacing: 0;
    font: bold 25px "Liberation Sans", sans-serif;
}

th, td {
    height: 36px;
    padding: 0 4px;
    line-height: 34px;
    text-align: right;
    vertical-align: top;
}

th {
    height: 34px;
    padding: 0 2px;
    line-height: 28px;
    background: #efefef;
    border-top: 2px solid #fff;
    border-right: 2px solid #000;
    border-bottom: 2px solid #000;
}

.vscroll {
    display: flex;
    flex-direction: column;
    align-items: center;
}

.vscroll button, .hscroll button {
    display: flex;
    align-items: center;
    justify-content: center;
    width: 34px;
    height: 34px;
}

.vscroll svg, .hscroll svg {
    width: 16px;
    height: 16px;
    fill: none;
    stroke: #555;
    stroke-width: 3;
}

.vscroll .end {
    margin-top: auto;
}

.thumb {
    width: 30px;
    height: 34px;
    background: #cdcdcd;
}

.hscroll {
    display: flex;
    justify-content: flex-end;
    align-items: center;
}

.grip {
    display: flex;
    align-items: flex-end;
    justify-content: flex-end;
    padding: 4px;
}

.grip svg {
    width: 16px;
    height: 16px;
}

/* tool palette */
.palette {
    position: absolute;
    top: 154px;
    right: 2px;
    width: 142px;
    padding: 2px 2px 12px;
    background: #efefef;
    border: 2px solid;
    border-color: #e8e8e8 #6b6b6b #6b6b6b #e8e8e8;
    box-shadow: inset 2px 2px 0 #fff, inset -2px -2px 0 #a8a8a8;
}

.palette-title {
    display: flex;
    align-items: center;
    height: 22px;
    margin: 2px 2px 0;
    padding-left: 6px;
    background: #99b4d1;
    font: 23px/22px "Liberation Sans", sans-serif;
}

.palette-title button {
    display: flex;
    align-items: center;
    justify-content: center;
    width: 22px;
    height: 22px;
    margin-left: auto;
    background: #f0f0f0;
    border: 2px solid;
    border-color: #fff #696969 #696969 #fff;
}

.palette-title svg {
    width: 12px;
    height: 12px;
}

.palette-grid {
    display: grid;
    grid-template-columns: 54px 54px;
    gap: 4px;
    width: 116px;
    margin: 2px 0 0 6px;
    padding: 2px;
    background: #c6c6c6;
}

.palette-grid .gap {
    margin: 0 -2px;
    background: #efefef;
}

.watermark {
    position: absolute;
    right: 68px;
    bottom: 72px;
    color: #fff;
    font-family: "Noto Sans CJK SC", sans-serif;
    font-size: 78px;
    line-height: 112px;
    text-shadow: 6px 6px 0 #7a7a7a;
}
```
